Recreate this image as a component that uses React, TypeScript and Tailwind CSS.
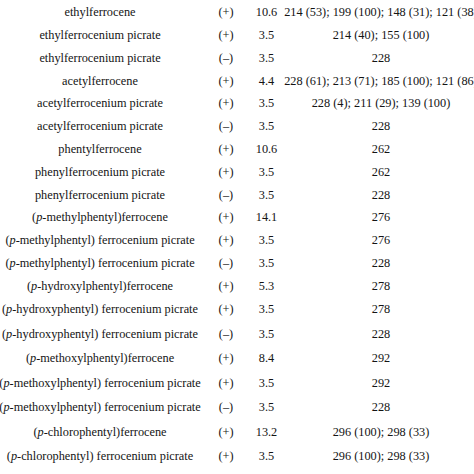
type Row = {
  name: React.ReactNode;
  sign: string;
  value: string;
  ms: string;
};

const P = () => <i>p</i>;

const rows: Row[] = [
  { name: "ethylferrocene", sign: "(+)", value: "10.6", ms: "214 (53); 199 (100); 148 (31); 121 (38)" },
  { name: "ethylferrocenium picrate", sign: "(+)", value: "3.5", ms: "214 (40); 155 (100)" },
  { name: "ethylferrocenium picrate", sign: "(–)", value: "3.5", ms: "228" },
  { name: "acetylferrocene", sign: "(+)", value: "4.4", ms: "228 (61); 213 (71); 185 (100); 121 (86)" },
  { name: "acetylferrocenium picrate", sign: "(+)", value: "3.5", ms: "228 (4); 211 (29); 139 (100)" },
  { name: "acetylferrocenium picrate", sign: "(–)", value: "3.5", ms: "228" },
  { name: "phentylferrocene", sign: "(+)", value: "10.6", ms: "262" },
  { name: "phenylferrocenium picrate", sign: "(+)", value: "3.5", ms: "262" },
  { name: "phenylferrocenium picrate", sign: "(–)", value: "3.5", ms: "228" },
  { name: <>(<P />-methylphentyl)ferrocene</>, sign: "(+)", value: "14.1", ms: "276" },
  { name: <>(<P />-methylphentyl) ferrocenium picrate</>, sign: "(+)", value: "3.5", ms: "276" },
  { name: <>(<P />-methylphentyl) ferrocenium picrate</>, sign: "(–)", value: "3.5", ms: "228" },
  { name: <>(<P />-hydroxylphentyl)ferrocene</>, sign: "(+)", value: "5.3", ms: "278" },
  { name: <>(<P />-hydroxyphentyl) ferrocenium picrate</>, sign: "(+)", value: "3.5", ms: "278" },
  { name: <>(<P />-hydroxyphentyl) ferrocenium picrate</>, sign: "(–)", value: "3.5", ms: "228" },
  { name: <>(<P />-methoxylphentyl)ferrocene</>, sign: "(+)", value: "8.4", ms: "292" },
  { name: <>(<P />-methoxylphentyl) ferrocenium picrate</>, sign: "(+)", value: "3.5", ms: "292" },
  { name: <>(<P />-methoxylphentyl) ferrocenium picrate</>, sign: "(–)", value: "3.5", ms: "228" },
  { name: <>(<P />-chlorophentyl)ferrocene</>, sign: "(+)", value: "13.2", ms: "296 (100); 298 (33)" },
  { name: <>(<P />-chlorophentyl) ferrocenium picrate</>, sign: "(+)", value: "3.5", ms: "296 (100); 298 (33)" },
];

export default function App() {
  return (
    <div
      className="w-[474px] h-[474px] overflow-hidden bg-white text-[#141414] text-[12.3px] pt-[1px]"
      style={{ fontFamily: '"Liberation Serif", "Times New Roman", serif' }}
    >
      {rows.map((r, i) => (
        <div
          key={i}
          className={`flex items-center whitespace-nowrap ${i < 13 ? "h-[22.8px]" : "h-[24.5px]"}`}
        >
          <div className="w-[200px] shrink-0 flex justify-center">{r.name}</div>
          <div className="w-[52px] shrink-0 flex justify-center">{r.sign}</div>
          <div className="w-[29px] shrink-0 flex justify-center">{r.value}</div>
          <div className="w-[200px] shrink-0 flex justify-center">{r.ms}</div>
        </div>
      ))}
    </div>
  );
}
